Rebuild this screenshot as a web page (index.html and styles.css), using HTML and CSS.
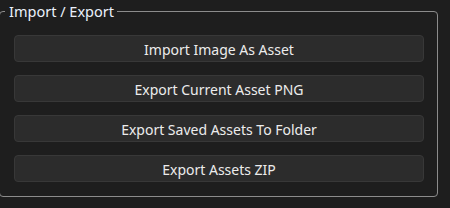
FILE: index.html
```html
<!DOCTYPE html>
<html lang="en">
<head>
    <meta charset="UTF-8">
    <title>Import / Export</title>
    <link rel="stylesheet" href="styles.css">
</head>
<body>
    <fieldset class="group">
        <legend>Import / Export</legend>
        <div class="actions">
            <button class="action-button">Import Image As Asset</button>
            <button class="action-button">Export Current Asset PNG</button>
            <button class="action-button">Export Saved Assets To Folder</button>
            <button class="action-button">Export Assets ZIP</button>
        </div>
    </fieldset>
</body>
</html>
```

FILE: styles.css
```css
body {
    font-family: 'Noto Sans', 'Open Sans', sans-serif;
    margin: 0;
    padding: 0;
    background: #1e1e1e;
    color: #e6e6e6;
    width: 450px;
    height: 208px;
    overflow: hidden;
}
.group {
    box-sizing: border-box;
    width: 439px;
    margin: 2px 0 0 -1px;
    padding: 15px 13px 14px 14px;
    border: 1px solid #8c8c8c;
    border-radius: 4px;
    min-width: 0;
}
.group legend {
    margin-left: -9px;
    padding: 0 3px 0 4px;
    font-size: 14.5px;
    line-height: 18px;
    color: #eaf1fb;
}
.actions {
    display: flex;
    flex-direction: column;
    gap: 13px;
}
.action-button {
    box-sizing: border-box;
    height: 27px;
    background: #2c2c2c;
    border: 1px solid #383838;
    border-radius: 4px;
    color: #ececec;
    font-family: inherit;
    font-size: 14px;
    padding: 1px 0 0;
    cursor: pointer;
}
.action-button:hover {
    background: #343434;
}
```
